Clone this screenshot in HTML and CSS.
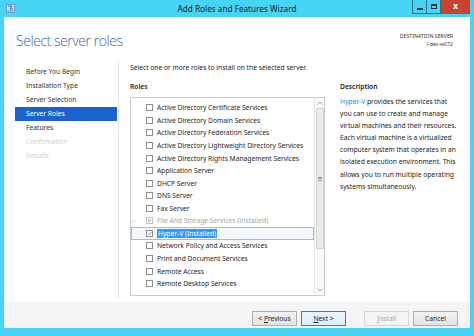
FILE: index.html
```html
<!DOCTYPE html>
<html>
<head>
<meta charset="utf-8">
<title>Add Roles and Features Wizard</title>
<link rel="stylesheet" href="styles.css">
</head>
<body>
<div class="window">
  <div class="titlebar">
    <div class="tb-icon">
      <svg width="9" height="9" viewBox="0 0 9 9">
        <rect x="0.5" y="0.5" width="8" height="8" fill="#bfe6f7" stroke="#6c9cc4"/>
        <path d="M2 2h4l-2 3h3" fill="none" stroke="#2f6fb3" stroke-width="1"/>
        <rect x="1.5" y="6" width="6" height="2" fill="#8fb8d8"/>
      </svg>
    </div>
    <div class="tb-title">Add Roles and Features Wizard</div>
    <div class="tb-buttons">
      <span class="wb min"><i class="g-min"></i></span>
      <span class="wb max"><i class="g-max"></i></span>
      <span class="wb close">x</span>
    </div>
  </div>
  <div class="panel">
    <header class="head">
      <h1>Select server roles</h1>
      <div class="dest">DESTINATION SERVER<br>l-dev-w072</div>
    </header>
    <div class="main">
      <nav class="nav">
        <div class="nav-item">Before You Begin</div>
        <div class="nav-item">Installation Type</div>
        <div class="nav-item">Server Selection</div>
        <div class="nav-item active">Server Roles</div>
        <div class="nav-item">Features</div>
        <div class="nav-item off">Confirmation</div>
        <div class="nav-item off">Results</div>
      </nav>
      <section class="content">
        <p class="intro">Select one or more roles to install on the selected server.</p>
        <div class="cols">
          <div class="roles">
            <div class="label">Roles</div>
            <div class="listbox">
              <ul class="items">
                <li class="item"><span class="cb"></span>Active Directory Certificate Services</li>
                <li class="item"><span class="cb"></span>Active Directory Domain Services</li>
                <li class="item"><span class="cb"></span>Active Directory Federation Services</li>
                <li class="item"><span class="cb"></span>Active Directory Lightweight Directory Services</li>
                <li class="item"><span class="cb"></span>Active Directory Rights Management Services</li>
                <li class="item"><span class="cb"></span>Application Server</li>
                <li class="item"><span class="cb"></span>DHCP Server</li>
                <li class="item"><span class="cb"></span>DNS Server</li>
                <li class="item"><span class="cb"></span>Fax Server</li>
                <li class="item grey"><span class="exp">&#9655;</span><span class="cb part"></span>File And Storage Services (Installed)</li>
                <li class="item sel"><span class="cb checked"><svg width="7" height="7" viewBox="0 0 7 7"><path d="M1.3 3.6l1.6 1.6 3-3.8" fill="none" stroke="#555" stroke-width="0.9"/></svg></span><span class="hl">Hyper-V (Installed)</span></li>
                <li class="item"><span class="cb"></span>Network Policy and Access Services</li>
                <li class="item"><span class="cb"></span>Print and Document Services</li>
                <li class="item"><span class="cb"></span>Remote Access</li>
                <li class="item"><span class="cb"></span>Remote Desktop Services</li>
              </ul>
              <div class="scroll">
                <div class="arrow up"><svg width="6" height="4" viewBox="0 0 6 4"><path d="M0.5 3.5L3 1l2.5 2.5" fill="none" stroke="#8a8a8a" stroke-width="0.8"/></svg></div>
                <div class="thumb"><span class="grip"></span></div>
                <div class="track"></div>
                <div class="arrow down"><svg width="6" height="4" viewBox="0 0 6 4"><path d="M0.5 0.5L3 3l2.5-2.5" fill="none" stroke="#8a8a8a" stroke-width="0.8"/></svg></div>
              </div>
            </div>
          </div>
          <div class="desc">
            <div class="label">Description</div>
            <p class="desc-text"><span class="link">Hyper-V</span> provides the services that<br>you can use to create and manage<br>virtual machines and their resources.<br>Each virtual machine is a virtualized<br>computer system that operates in an<br>isolated execution environment. This<br>allows you to run multiple operating<br>systems simultaneously.</p>
          </div>
        </div>
      </section>
    </div>
    <footer class="foot">
      <button class="btn">&lt; <u>P</u>revious</button>
      <button class="btn default"><u>N</u>ext &gt;</button>
      <button class="btn disabled gap"><u>I</u>nstall</button>
      <button class="btn">Cancel</button>
    </footer>
  </div>
</div>
</body>
</html>
```

FILE: styles.css
```css
* { box-sizing: border-box; margin: 0; padding: 0; }
body {
  margin: 0;
  font-family: "Noto Sans", "Open Sans", sans-serif;
  font-size: 6.7px;
  color: #1e1e1e;
  background: #48d4f4;
}
.window {
  width: 474px;
  height: 336px;
  background: #48d4f4;
  padding: 0 4px 8px;
  display: flex;
  flex-direction: column;
}
.titlebar {
  height: 17px;
  flex: none;
  display: grid;
  grid-template-columns: 1fr auto 1fr;
  align-items: start;
}
.tb-icon { padding: 4px 0 0 2px; line-height: 0; }
.tb-title {
  font-size: 8.2px;
  line-height: 17px;
  color: #1a1a1a;
  white-space: nowrap;
}
.tb-buttons { justify-self: end; display: flex; height: 14px; }
.wb {
  height: 14px;
  width: 15px;
  border: 1px solid #3a6d80;
  border-top: none;
  display: flex;
  align-items: center;
  justify-content: center;
}
.wb.max { width: 14px; border-left: none; }
.wb.close {
  width: 29px;
  border: none;
  background: #c9432f;
  color: #fff;
  font-family: "DejaVu Sans", sans-serif;
  font-weight: bold;
  font-size: 8px;
  line-height: 14px;
}
.g-min { display: block; width: 6px; height: 2px; background: #1d2f3a; margin-top: 4px; }
.g-max { display: block; width: 6px; height: 5px; border: 1px solid #1d2f3a; border-top-width: 2px; }

.panel {
  flex: 1;
  background: #fff;
  display: flex;
  flex-direction: column;
}
.head {
  height: 45px;
  flex: none;
  display: flex;
  justify-content: space-between;
  align-items: flex-start;
  padding: 15px 17px 0 12px;
}
.head h1 {
  font-family: "Open Sans", "Noto Sans", sans-serif;
  font-weight: 300;
  font-size: 14px;
  line-height: 18px;
  letter-spacing: -0.45px;
  color: #3e6397;
}
.dest {
  font-size: 5.2px;
  line-height: 8px;
  text-align: right;
  color: #333;
}
.main { flex: 1; display: flex; min-height: 0; }
.nav {
  width: 115px;
  flex: none;
  border-right: 1px solid #e6e6e6;
  padding: 3px 1px 0 11px;
  margin-bottom: 4px;
}
.nav-item {
  height: 14px;
  line-height: 14px;
  padding-left: 11px;
  color: #333;
  white-space: nowrap;
}
.nav-item.active { background: #1a63cf; color: #fff; }
.nav-item.off { color: #cfcfcf; }

.content { flex: 1; padding-left: 11px; }
.intro { line-height: 10px; margin-top: 1px; color: #222; white-space: nowrap; }
.cols { display: flex; gap: 15px; margin-top: 9px; }
.label { line-height: 10px; font-weight: 600; color: #222; }
.roles { width: 195px; flex: none; }
.listbox {
  margin-top: 5px;
  height: 199px;
  border: 1px solid #c9c9c9;
  display: flex;
}
.items { list-style: none; flex: 1; padding-top: 3.5px; min-width: 0; }
.item {
  height: 12.57px;
  display: flex;
  align-items: center;
  padding-left: 15px;
  white-space: nowrap;
  position: relative;
}
.cb {
  width: 7px;
  height: 7px;
  border: 1px solid #8e8e8e;
  background: #fff;
  margin-right: 4px;
  flex: none;
  display: flex;
  align-items: center;
  justify-content: center;
}
.cb.checked { border-color: #8e8e8e; }
.cb.checked svg { display: block; }
.cb.part { border-color: #c4c4c4; }
.cb.part::after { content: ""; width: 3px; height: 3px; background: #cdcdcd; }
.item.grey { color: #a3a3a3; }
.exp {
  position: absolute;
  left: 1px;
  font-size: 5px;
  color: #b0b0b0;
}
.item.sel {
  border: 1px solid #8fc3ec;
  background: #f2f8fd;
  padding-left: 14px;
}
.hl { background: #3399ff; color: #fff; padding: 0 1px; line-height: 9px; }

.scroll {
  width: 10px;
  flex: none;
  border-left: 1px solid #e6e6e6;
  background: #fafafa;
  display: flex;
  flex-direction: column;
  align-items: center;
}
.arrow { height: 10px; display: flex; align-items: center; justify-content: center; line-height: 0; }
.thumb {
  width: 8px;
  height: 141px;
  background: #ececec;
  border: 1px solid #d4d4d4;
  display: flex;
  align-items: center;
  justify-content: center;
}
.grip { width: 4px; height: 4px; border-top: 1px solid #999; border-bottom: 1px solid #999; position: relative; }
.grip::after { content: ""; position: absolute; left: 0; right: 0; top: 0.5px; border-top: 1px solid #999; }
.track { flex: 1; }

.desc { width: 125px; }
.desc-text {
  margin-top: 4px;
  line-height: 12.1px;
  white-space: nowrap;
  color: #222;
}
.link { color: #1e8ad6; }

.foot {
  height: 26px;
  flex: none;
  background: #f5f4f6;
  display: flex;
  justify-content: flex-end;
  align-items: flex-start;
  padding: 9px 12px 0 0;
  gap: 4px;
}
.btn {
  width: 45px;
  height: 15px;
  font-family: "Noto Sans", "Open Sans", sans-serif;
  font-size: 6.7px;
  color: #222;
  background: linear-gradient(#f3f3f3, #e3e3e3);
  border: 1px solid #acacac;
  border-radius: 0;
}
.btn u { text-decoration: underline; }
.btn.default { border-color: #3c7fb1; background: linear-gradient(#eaf6fd, #d9eefa); }
.btn.disabled { color: #a8a8a8; background: #f4f4f4; border-color: #d6d6d6; }
.btn.gap { margin-left: 14px; }
```
